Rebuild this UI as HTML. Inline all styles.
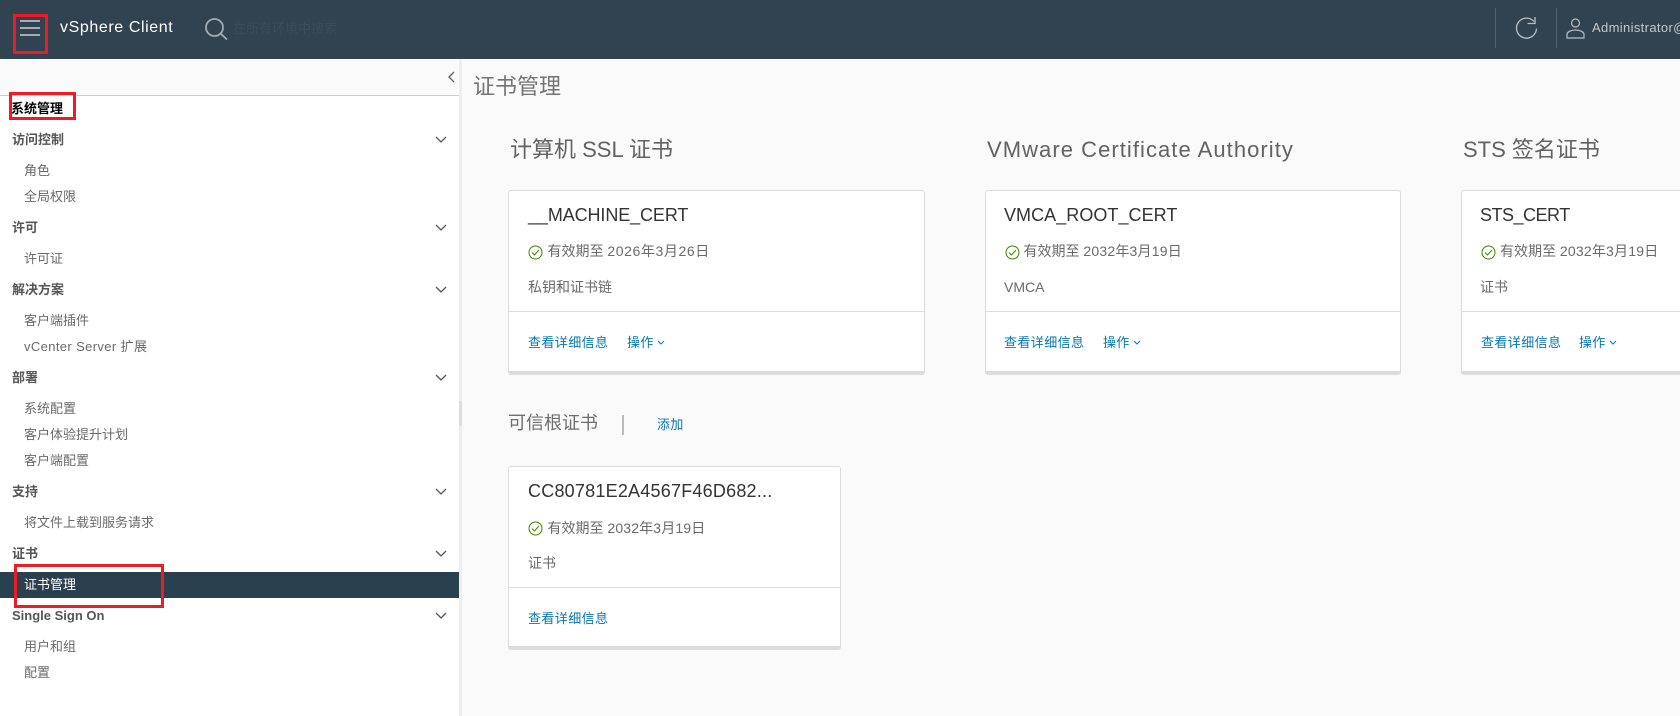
<!DOCTYPE html>
<html lang="zh"><head><meta charset="utf-8"><title>vSphere Client</title>
<style>
html,body{margin:0;padding:0;width:1680px;height:716px;overflow:hidden;background:#fafafa}
body{position:relative;font-family:"Liberation Sans","Noto Sans CJK SC",sans-serif;color:#666}
.a{position:absolute}
.t{position:absolute;white-space:nowrap;height:20px;line-height:20px;font-size:13px}
.h{font-weight:bold;color:#565656}
.s{color:#6a6a6a}
.c{position:absolute;background:#fff;border:1px solid #dcdcdc;border-bottom:4px solid #dcdcdc;border-radius:3px;box-sizing:border-box}
.d{position:absolute;left:0;right:0;height:1px;background:#dcdcdc}
.ti{font-size:18px;color:#333}
.st{font-size:14px;color:#6a6a6a}
.l{color:#0079b8;letter-spacing:.4px}
.hd{font-size:22px;color:#626262;height:30px;line-height:30px}
svg{position:absolute;overflow:visible}
.r{position:absolute;border:3px solid #ed1c24;box-sizing:border-box}
</style></head><body>
<div class="a" style="left:0;top:0;width:1680px;height:59px;background:#314351"></div>
<div class="a" style="left:20px;top:20px;width:20px;height:1.500px;background:#a3adb4"></div>
<div class="a" style="left:20px;top:27px;width:20px;height:1.500px;background:#a3adb4"></div>
<div class="a" style="left:20px;top:34px;width:20px;height:1.500px;background:#a3adb4"></div>
<div class="t" style="left:60px;top:17px;font-size:16px;letter-spacing:.6px;color:#fff;height:22px;line-height:22px">vSphere Client</div>
<svg style="left:205px;top:18px" width="23" height="22" fill="none" stroke="#a3adb4" stroke-width="1.8"><circle cx="9.500" cy="9.500" r="8.500"/><path d="M15.500 15.500L22 21.500"/></svg>
<div class="t" style="left:233px;top:19px;color:#3b4d5b">在所有环境中搜索</div>
<div class="a" style="left:1495px;top:8px;width:1px;height:40px;background:#52626f"></div>
<div class="a" style="left:1556px;top:8px;width:1px;height:40px;background:#52626f"></div>
<svg style="left:1515px;top:17px" width="23" height="23" fill="none" stroke="#b7bfc5" stroke-width="1.300"><path d="M19 4.500A10 10 0 1 0 21.500 11.500"/><path d="M12.500 6.500H20V0"/></svg>
<svg style="left:1566px;top:18px" width="19" height="21" fill="none" stroke="#b7bfc5" stroke-width="1.200"><circle cx="9.500" cy="5" r="4"/><path d="M1 20v-3.500c0-2.500 4-4.500 8.500-4.500s8.500 2 8.500 4.500V20z"/></svg>
<div class="t" style="left:1592px;top:18px;width:88px;overflow:hidden;font-size:13px;letter-spacing:.35px;color:#c3c9ce">Administrator@VSPHERE.LOCAL</div>

<div class="a" style="left:0;top:59px;width:459px;height:657px;background:#fff"></div>
<div class="a" style="left:0;top:59px;width:459px;height:36px;background:#fafafa;border-bottom:1px solid #ccc"></div>
<div class="a" style="left:459px;top:59px;width:3px;height:657px;background:#eee"></div>
<div class="a" style="left:459px;top:401px;width:3px;height:25px;background:#ddd"></div>
<svg style="left:448px;top:72px" width="6" height="10" fill="none" stroke="#666" stroke-width="1.400"><path d="M6 0L1 5l5 5"/></svg>

<div class="t" style="left:11px;top:99px;font-weight:bold;color:#000">系统管理</div>
<div class="t h" style="left:12px;top:130px">访问控制</div>
<div class="t s" style="left:24px;top:161px">角色</div>
<div class="t s" style="left:24px;top:187px">全局权限</div>
<div class="t h" style="left:12px;top:218px">许可</div>
<div class="t s" style="left:24px;top:249px">许可证</div>
<div class="t h" style="left:12px;top:280px">解决方案</div>
<div class="t s" style="left:24px;top:311px">客户端插件</div>
<div class="t s" style="left:24px;top:337px;letter-spacing:.37px">vCenter Server 扩展</div>
<div class="t h" style="left:12px;top:368px">部署</div>
<div class="t s" style="left:24px;top:399px">系统配置</div>
<div class="t s" style="left:24px;top:425px">客户体验提升计划</div>
<div class="t s" style="left:24px;top:451px">客户端配置</div>
<div class="t h" style="left:12px;top:482px">支持</div>
<div class="t s" style="left:24px;top:513px">将文件上载到服务请求</div>
<div class="t h" style="left:12px;top:544px">证书</div>
<div class="a" style="left:0;top:572px;width:459px;height:26px;background:#29404f"></div>
<div class="t" style="left:24px;top:575px;color:#fff">证书管理</div>
<div class="t h" style="left:12px;top:606px;letter-spacing:0">Single Sign On</div>
<div class="t s" style="left:24px;top:637px">用户和组</div>
<div class="t s" style="left:24px;top:663px">配置</div>

<svg style="left:436px;top:137px" width="10" height="6" fill="none" stroke="#555" stroke-width="1.300"><path d="M0 0l5 5 5-5"/></svg>
<svg style="left:436px;top:225px" width="10" height="6" fill="none" stroke="#555" stroke-width="1.300"><path d="M0 0l5 5 5-5"/></svg>
<svg style="left:436px;top:287px" width="10" height="6" fill="none" stroke="#555" stroke-width="1.300"><path d="M0 0l5 5 5-5"/></svg>
<svg style="left:436px;top:375px" width="10" height="6" fill="none" stroke="#555" stroke-width="1.300"><path d="M0 0l5 5 5-5"/></svg>
<svg style="left:436px;top:489px" width="10" height="6" fill="none" stroke="#555" stroke-width="1.300"><path d="M0 0l5 5 5-5"/></svg>
<svg style="left:436px;top:551px" width="10" height="6" fill="none" stroke="#555" stroke-width="1.300"><path d="M0 0l5 5 5-5"/></svg>
<svg style="left:436px;top:613px" width="10" height="6" fill="none" stroke="#555" stroke-width="1.300"><path d="M0 0l5 5 5-5"/></svg>

<div class="r" style="left:13px;top:14px;width:35px;height:40px"></div>
<div class="r" style="left:9px;top:92px;width:67px;height:28px"></div>
<div class="r" style="left:14px;top:564px;width:150px;height:44px"></div>

<div class="t" style="left:473px;top:72px;font-size:22px;height:30px;line-height:30px;color:#737373">证书管理</div>

<div class="t hd" style="left:510px;top:135px">计算机 SSL 证书</div>
<div class="t hd" style="left:987px;top:135px;letter-spacing:1.05px">VMware Certificate Authority</div>
<div class="t hd" style="left:1463px;top:135px">STS 签名证书</div>

<div class="c" style="left:508px;top:190px;width:417px;height:185px"><div class="d" style="top:120px"></div></div>
<div class="c" style="left:985px;top:190px;width:416px;height:185px"><div class="d" style="top:120px"></div></div>
<div class="c" style="left:1461px;top:190px;width:219px;height:185px;border-right:0;border-radius:3px 0 0 3px"><div class="d" style="top:120px"></div></div>
<div class="c" style="left:508px;top:466px;width:333px;height:184px"><div class="d" style="top:120px"></div></div>

<div class="t ti" style="left:528px;top:205px;letter-spacing:-.1px">__MACHINE_CERT</div>
<svg style="left:528px;top:245px" width="15" height="15" fill="none" stroke="#3c8500" stroke-width="1"><circle cx="7.500" cy="7.500" r="6.500"/><path d="M4 7.500l2.500 2.500 4.500-5"/></svg>
<div class="t st" style="left:547.500px;top:241px">有效期至 <span style="letter-spacing:.6px">2026年3月26日</span></div>
<div class="t st" style="left:528px;top:277px">私钥和证书链</div>
<div class="t l" style="left:528px;top:333px">查看详细信息</div>
<div class="t l" style="left:627px;top:333px">操作</div>
<svg style="left:658px;top:341px" width="6" height="4" fill="none" stroke="#0079b8"><path d="M0 0l3 3 3-3"/></svg>

<div class="t ti" style="left:1004px;top:205px;letter-spacing:.05px">VMCA_ROOT_CERT</div>
<svg style="left:1005px;top:245px" width="15" height="15" fill="none" stroke="#3c8500" stroke-width="1"><circle cx="7.500" cy="7.500" r="6.500"/><path d="M4 7.500l2.500 2.500 4.500-5"/></svg>
<div class="t st" style="left:1023.500px;top:241px">有效期至 <span style="letter-spacing:.2px">2032年3月19日</span></div>
<div class="t st" style="left:1004px;top:277px">VMCA</div>
<div class="t l" style="left:1004px;top:333px">查看详细信息</div>
<div class="t l" style="left:1103px;top:333px">操作</div>
<svg style="left:1134px;top:341px" width="6" height="4" fill="none" stroke="#0079b8"><path d="M0 0l3 3 3-3"/></svg>

<div class="t ti" style="left:1480px;top:205px;letter-spacing:-.5px">STS_CERT</div>
<svg style="left:1481px;top:245px" width="15" height="15" fill="none" stroke="#3c8500" stroke-width="1"><circle cx="7.500" cy="7.500" r="6.500"/><path d="M4 7.500l2.500 2.500 4.500-5"/></svg>
<div class="t st" style="left:1500px;top:241px">有效期至 <span style="letter-spacing:.2px">2032年3月19日</span></div>
<div class="t st" style="left:1480px;top:277px">证书</div>
<div class="t l" style="left:1481px;top:333px">查看详细信息</div>
<div class="t l" style="left:1579px;top:333px">操作</div>
<svg style="left:1610px;top:341px" width="6" height="4" fill="none" stroke="#0079b8"><path d="M0 0l3 3 3-3"/></svg>

<div class="t" style="left:508px;top:413px;font-size:18px;color:#6e6e6e">可信根证书</div>
<div class="a" style="left:622px;top:415px;width:2px;height:20px;background:#bbb"></div>
<div class="t l" style="left:657px;top:415px">添加</div>

<div class="t ti" style="left:528px;top:481px;letter-spacing:.22px">CC80781E2A4567F46D682...</div>
<svg style="left:528px;top:521px" width="15" height="15" fill="none" stroke="#3c8500" stroke-width="1"><circle cx="7.500" cy="7.500" r="6.500"/><path d="M4 7.500l2.500 2.500 4.500-5"/></svg>
<div class="t st" style="left:547.500px;top:518px">有效期至 <span style="letter-spacing:.15px">2032年3月19日</span></div>
<div class="t st" style="left:528px;top:553px">证书</div>
<div class="t l" style="left:528px;top:609px">查看详细信息</div>
</body></html>
